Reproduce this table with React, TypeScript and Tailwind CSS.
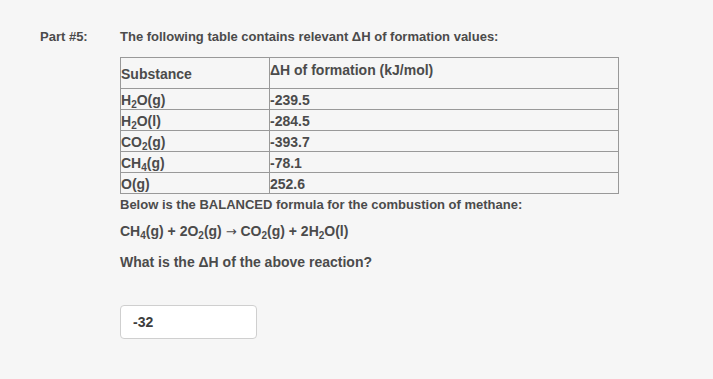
function Sub({ children }: { children: React.ReactNode }) {
  return <span className="relative top-[3px] text-[10px] leading-none">{children}</span>;
}

const rows: [React.ReactNode, string][] = [
  [<>H<Sub>2</Sub>O(g)</>, "-239.5"],
  [<>H<Sub>2</Sub>O(l)</>, "-284.5"],
  [<>CO<Sub>2</Sub>(g)</>, "-393.7"],
  [<>CH<Sub>4</Sub>(g)</>, "-78.1"],
  [<>O(g)</>, "252.6"],
];

export default function App() {
  return (
    <div
      className="min-h-[379px] w-full bg-[#f6f6f6] pt-[29px] text-[13px] font-bold text-[#4b4b4b]"
      style={{ fontFamily: '"Liberation Sans", Arial, sans-serif' }}
    >
      <div className="flex">
        <div className="w-[120px] shrink-0 pl-10 leading-4">Part #5:</div>
        <div className="flex-1">
          <p className="leading-4">The following table contains relevant ΔH of formation values:</p>

          <table className="mt-[12px] w-[499px] border-collapse border border-[#222] text-[14px]">
            <thead>
              <tr className="h-[31px]">
                <th className="w-[149px] border border-[#999] p-0 pt-[2px] text-left align-middle font-bold">Substance</th>
                <th className="border border-[#999] p-0 pt-[2px] text-left align-top font-bold">ΔH of formation (kJ/mol)</th>
              </tr>
            </thead>
            <tbody>
              {rows.map(([name, value], i) => (
                <tr key={i} className="h-[21px]">
                  <td className="border border-[#999] p-0 pt-[1px] leading-4">{name}</td>
                  <td className="border border-[#999] p-0 pt-[1px] leading-4">{value}</td>
                </tr>
              ))}
            </tbody>
          </table>

          <p className="mt-[3px] leading-4">Below is the BALANCED formula for the combustion of methane:</p>
          <p className="mt-[10px] text-[14px] leading-4">
            CH<Sub>4</Sub>(g) + 2O<Sub>2</Sub>(g){" "}
            <span style={{ fontFamily: '"DejaVu Sans", sans-serif' }} className="text-[13px] font-normal">→</span>{" "}
            CO<Sub>2</Sub>(g) + 2H<Sub>2</Sub>O(l)
          </p>
          <p className="mt-[14px] text-[14px] leading-4">What is the ΔH of the above reaction?</p>

          <input
            readOnly
            value="-32"
            className="mt-[35px] h-[34px] w-[137px] rounded-[4px] border border-[#cfcfcf] bg-white px-[12px] text-[14px] font-bold text-[#3d3d3d] outline-none"
          />
        </div>
      </div>
    </div>
  );
}
